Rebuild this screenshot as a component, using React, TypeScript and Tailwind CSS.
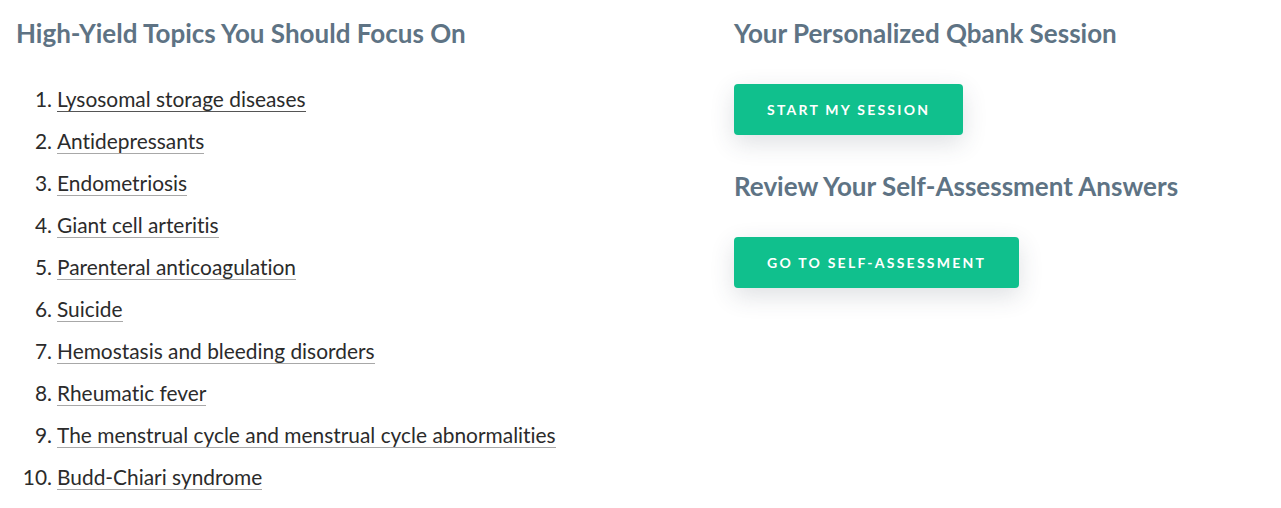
import React from 'react';

const TOPICS = [
    'Lysosomal storage diseases',
    'Antidepressants',
    'Endometriosis',
    'Giant cell arteritis',
    'Parenteral anticoagulation',
    'Suicide',
    'Hemostasis and bleeding disorders',
    'Rheumatic fever',
    'The menstrual cycle and menstrual cycle abnormalities',
    'Budd-Chiari syndrome',
];

function ActionButton({ label }: { label: string }) {
    return (
        <button className="h-[51px] px-[33px] rounded-[4px] bg-[#10c08d] text-white text-[14px] font-bold tracking-[0.16em] uppercase shadow-[0_8px_24px_rgba(50,60,80,0.16)] self-start">
            {label}
        </button>
    );
}

export default function App() {
    return (
        <div className="w-[1281px] h-[508px] bg-white font-['Lato',sans-serif] [font-variant-ligatures:none] grid grid-cols-[718px_1fr] pl-4 pt-[18px]">
            {/* Left column — topics */}
            <div className="flex flex-col">
                <h2 className="text-[26px] leading-[31px] font-bold text-[#5e7384]">High-Yield Topics You Should Focus On</h2>
                <ol className="mt-[38px] flex flex-col">
                    {TOPICS.map((t, i) => (
                        <li key={t} className="flex items-start h-[42px] text-[20.9px] leading-6 text-[#2b2b2b]">
                            <span className="w-[36px] text-right">{i + 1}.</span>
                            <a
                                href="#"
                                className={`ml-[5px] inline-block border-b ${i === 0 ? 'border-[#555]' : 'border-[#a8a8a8]'}`}
                            >
                                {t}
                            </a>
                        </li>
                    ))}
                </ol>
            </div>

            {/* Right column — actions */}
            <div className="flex flex-col">
                <h2 className="text-[26px] leading-[31px] font-bold text-[#5e7384]">Your Personalized Qbank Session</h2>
                <div className="mt-[35px] flex flex-col">
                    <ActionButton label="Start My Session" />
                </div>
                <h2 className="mt-[36px] text-[26px] leading-[31px] font-bold text-[#5e7384]">Review Your Self-Assessment Answers</h2>
                <div className="mt-[35px] flex flex-col">
                    <ActionButton label="Go to Self-Assessment" />
                </div>
            </div>
        </div>
    );
}
